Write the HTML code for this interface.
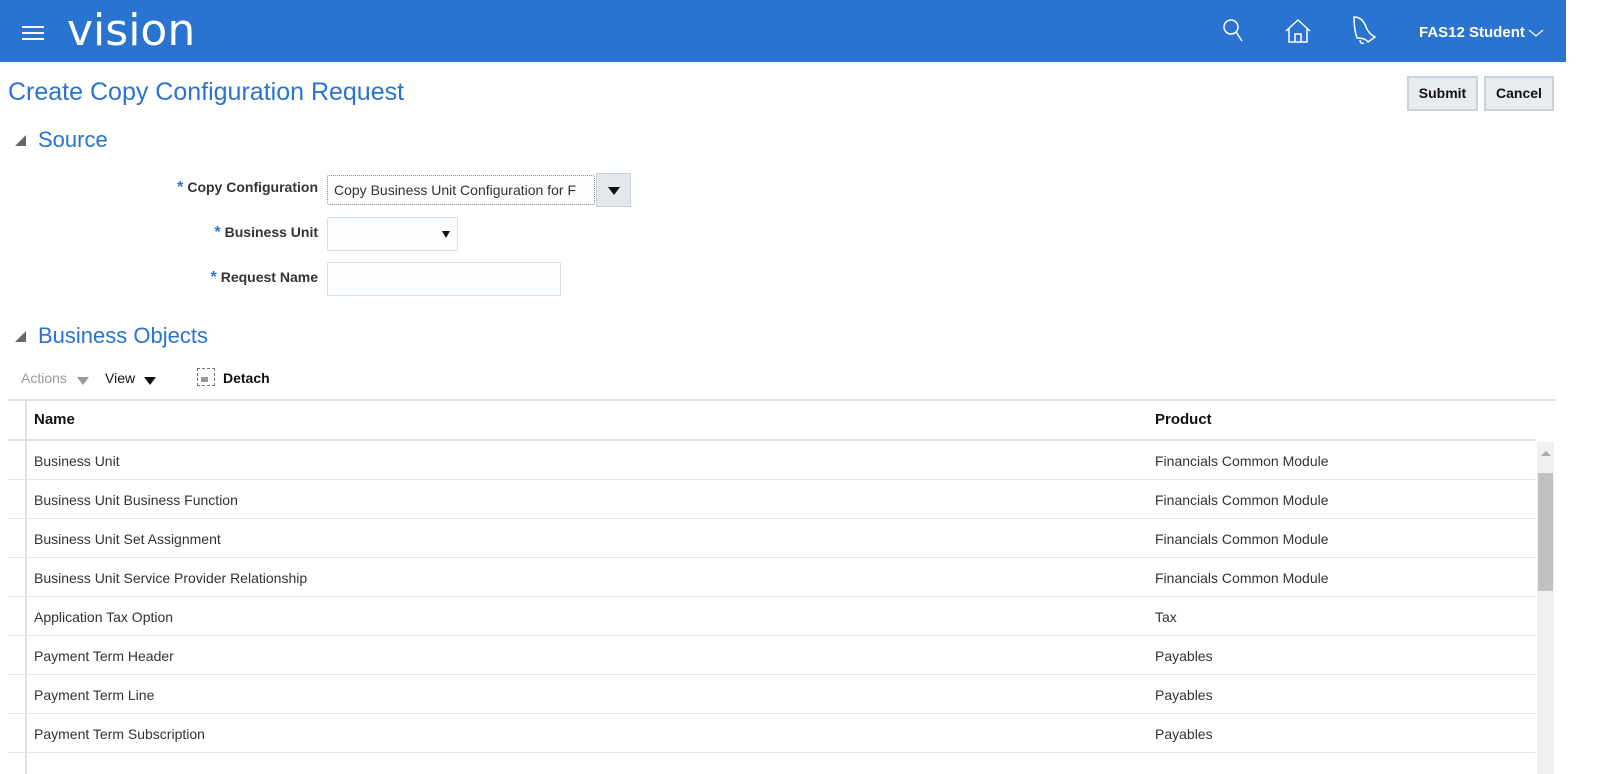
<!DOCTYPE html>
<html><head><style>
*{margin:0;padding:0;box-sizing:border-box}
body{width:1600px;height:774px;overflow:hidden;background:#fff;font-family:"Liberation Sans",Arial,sans-serif;position:relative;color:#333}
.a{position:absolute}
.hdr{left:0;top:0;width:1566px;height:62px;background:#2a73d0}
.lbl{font-size:14px;font-weight:bold;color:#333;text-align:right}
.lbl b{color:#2a73d0;font-size:16px;margin-right:4px}
.in{border:1px solid #d6dfe6;background:#fcfdfe;border-radius:2px}
.row{left:8px;width:1527px;height:39px;border-bottom:1px solid #e3e8ee;font-size:14px;color:#333}
.row span{position:absolute;top:12px}
.h2{font-size:22px;color:#2a73d0}
.tri{width:0;height:0;border-left:11px solid transparent;border-bottom:11px solid #666}
</style></head><body>
<div class="a hdr"></div>
<div class="a" style="left:22px;top:26px;width:22px;height:2px;background:#fff;box-shadow:0 6px 0 #fff,0 12px 0 #fff"></div>
<div class="a" style="left:67px;top:5px;font-size:44px;color:#fff;font-family:'DejaVu Sans',sans-serif;font-weight:normal">vision</div>
<svg class="a" style="left:1222px;top:18px" width="24" height="26" viewBox="0 0 24 26" fill="none" stroke="#fff" stroke-width="1.5"><circle cx="9" cy="9" r="7"/><path d="M14 14l6 9"/></svg>
<svg class="a" style="left:1284px;top:18px" width="28" height="26" viewBox="0 0 28 26" fill="none" stroke="#fff" stroke-width="1.5"><path d="M2 13L14 2l12 11M5 10v14h18V10M11 24v-8h6v8"/></svg>
<svg class="a" style="left:1350px;top:15px" width="28" height="30" viewBox="0 0 28 30" fill="none" stroke="#fff" stroke-width="1.5"><path d="M4 2c6 0 10 4 12 10 2 5 5 8 9 10l-7 5c-2-3-6-4-11-4-2-6-3-12-3-21zM10 25c0 3 2 4 4 3"/></svg>
<div class="a" style="left:1419px;top:24px;font-size:15px;font-weight:bold;color:#fff">FAS12 Student</div>
<svg class="a" style="left:1528px;top:28px" width="16" height="10"><path d="M1 2l7 6 7-6" fill="none" stroke="#fff" stroke-width="1.2"/></svg>

<div class="a" style="left:8px;top:78px;font-size:25px;color:#2a73d0">Create Copy Configuration Request</div>
<div class="a" style="left:1407px;top:76px;width:71px;height:35px;border:2px solid #c9d3dc;background:#e9ecef;font-size:14px;font-weight:bold;color:#111;text-align:center;line-height:31px">Submit</div>
<div class="a" style="left:1484px;top:76px;width:70px;height:35px;border:2px solid #c9d3dc;background:#e9ecef;font-size:14px;font-weight:bold;color:#111;text-align:center;line-height:31px">Cancel</div>

<div class="a tri" style="left:15px;top:135px"></div>
<div class="a h2" style="left:38px;top:127px">Source</div>
<div class="a lbl" style="left:120px;top:179px;width:198px"><b>*</b>Copy Configuration</div>
<div class="a lbl" style="left:120px;top:224px;width:198px"><b>*</b>Business Unit</div>
<div class="a lbl" style="left:120px;top:269px;width:198px"><b>*</b>Request Name</div>
<div class="a in" style="left:327px;top:175px;width:268px;height:30px;border:1px dotted #888;font-size:14px;padding:6px 6px;white-space:nowrap;overflow:hidden;color:#333">Copy Business Unit Configuration for F</div>
<div class="a" style="left:596px;top:173px;width:35px;height:34px;background:#e4e8ec;border:1px solid #c9d3dc"><div class="a" style="left:11px;top:13px;border-left:6px solid transparent;border-right:6px solid transparent;border-top:8px solid #111"></div></div>
<div class="a in" style="left:327px;top:217px;width:131px;height:34px"><div class="a" style="left:114px;top:13px;border-left:4px solid transparent;border-right:4px solid transparent;border-top:7px solid #111"></div></div>
<div class="a in" style="left:327px;top:262px;width:234px;height:34px"></div>

<div class="a tri" style="left:15px;top:331px"></div>
<div class="a h2" style="left:38px;top:323px">Business Objects</div>
<div class="a" style="left:21px;top:370px;font-size:14px;color:#999">Actions</div>
<div class="a" style="left:77px;top:377px;border-left:6px solid transparent;border-right:6px solid transparent;border-top:8px solid #999"></div>
<div class="a" style="left:105px;top:370px;font-size:14px;color:#111">View</div>
<div class="a" style="left:144px;top:377px;border-left:6px solid transparent;border-right:6px solid transparent;border-top:8px solid #111"></div>
<div class="a" style="left:197px;top:368px;width:18px;height:18px;border:1px dashed #777"></div>
<div class="a" style="left:201px;top:377px;width:7px;height:5px;background:#999"></div>
<div class="a" style="left:223px;top:370px;font-size:14px;font-weight:bold;color:#111">Detach</div>

<div class="a" style="left:8px;top:399px;width:1548px;height:2px;background:#dbe3ea"></div>
<div class="a" style="left:25px;top:401px;width:2px;height:373px;background:#dbe3ea"></div>
<div class="a" style="left:8px;top:439px;width:1527px;height:2px;background:#dbe3ea"></div>
<div class="a" style="left:34px;top:411px;font-size:15px;font-weight:bold;color:#111">Name</div>
<div class="a" style="left:1155px;top:411px;font-size:15px;font-weight:bold;color:#111">Product</div>

<div class="a row" style="top:441px"><span style="left:26px">Business Unit</span><span style="left:1147px">Financials Common Module</span></div>
<div class="a row" style="top:480px"><span style="left:26px">Business Unit Business Function</span><span style="left:1147px">Financials Common Module</span></div>
<div class="a row" style="top:519px"><span style="left:26px">Business Unit Set Assignment</span><span style="left:1147px">Financials Common Module</span></div>
<div class="a row" style="top:558px"><span style="left:26px">Business Unit Service Provider Relationship</span><span style="left:1147px">Financials Common Module</span></div>
<div class="a row" style="top:597px"><span style="left:26px">Application Tax Option</span><span style="left:1147px">Tax</span></div>
<div class="a row" style="top:636px"><span style="left:26px">Payment Term Header</span><span style="left:1147px">Payables</span></div>
<div class="a row" style="top:675px"><span style="left:26px">Payment Term Line</span><span style="left:1147px">Payables</span></div>
<div class="a row" style="top:714px"><span style="left:26px">Payment Term Subscription</span><span style="left:1147px">Payables</span></div>

<div class="a" style="left:1537px;top:442px;width:17px;height:332px;background:#f1f1f1"></div>
<div class="a" style="left:1541px;top:451px;border-left:5px solid transparent;border-right:5px solid transparent;border-bottom:5px solid #aaa"></div>
<div class="a" style="left:1538px;top:473px;width:15px;height:118px;background:#c1c1c1"></div>
</body></html>
